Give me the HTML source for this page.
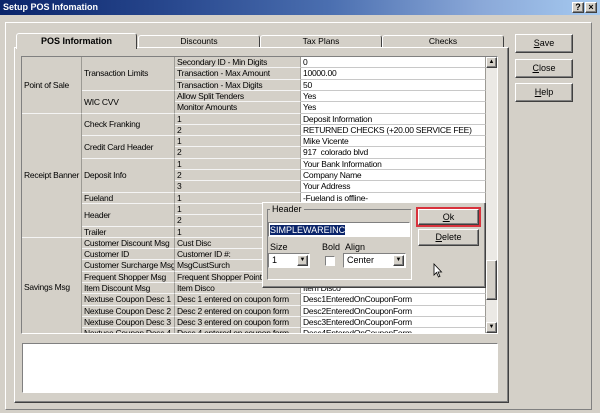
<!DOCTYPE html><html><head><style>
*{margin:0;padding:0;box-sizing:border-box}
body{width:600px;height:413px;background:#d4d0c8;font-family:"Liberation Sans",Arial,sans-serif;font-size:9px;color:#000;position:relative;overflow:hidden}
.a{position:absolute}
.c{position:absolute;background:#d4d0c8;border-right:1px solid #9c9a94;border-bottom:1px solid #f4f4f4;padding-left:2px;line-height:11px;white-space:nowrap;overflow:hidden;display:flex;align-items:center;font-size:8.5px;letter-spacing:-0.25px}
.w{background:#fff;border-bottom:1px solid #c8c8c8}
.btn{position:absolute;background:#d4d0c8;border:1px solid;border-color:#fff #404040 #404040 #fff;box-shadow:inset -1px -1px #808080;text-align:center;font-size:9px}
.sunk{border:1px solid;border-color:#808080 #fff #fff #808080}
</style></head><body>
<div class="a" style="left:0;top:0;width:600px;height:15px;background:linear-gradient(90deg,#0a246a 0%,#2a4a90 30%,#4b6fb0 55%,#8aa8d8 80%,#a6caf0 100%)"></div>
<div class="a" style="left:3px;top:2px;color:#fff;font-weight:bold;font-size:9px">Setup POS Infomation</div>
<div class="btn" style="left:572px;top:2px;width:12px;height:11px;font-weight:bold;line-height:9px">?</div>
<div class="btn" style="left:585px;top:2px;width:12px;height:11px;font-weight:bold;line-height:9px">×</div>
<div class="a" style="left:5px;top:22px;width:587px;height:388px;border:1px solid;border-color:#fff #808080 #808080 #fff"></div>
<div class="a" style="left:14px;top:47px;width:495px;height:356px;border:1px solid;border-color:#fff #404040 #404040 #fff;box-shadow:inset -1px -1px #808080"></div>
<div class="a" style="left:16px;top:33px;width:121px;height:16px;border:1px solid #fff;border-bottom:none;border-right-color:#404040;background:#d4d0c8;border-radius:3px 3px 0 0;text-align:center;font-weight:bold;line-height:15px">POS Information</div>
<div class="a" style="left:138px;top:35px;width:122px;height:12px;border:1px solid #fff;border-bottom:none;border-right-color:#404040;border-radius:3px 3px 0 0;text-align:center;line-height:11px;font-size:8.5px">Discounts</div>
<div class="a" style="left:260px;top:35px;width:122px;height:12px;border:1px solid #fff;border-bottom:none;border-right-color:#404040;border-radius:3px 3px 0 0;text-align:center;line-height:11px;font-size:8.5px">Tax Plans</div>
<div class="a" style="left:382px;top:35px;width:122px;height:12px;border:1px solid #fff;border-bottom:none;border-right-color:#404040;border-radius:3px 3px 0 0;text-align:center;line-height:11px;font-size:8.5px">Checks</div>
<div class="btn" style="left:515px;top:34px;width:58px;height:19px;line-height:17px"><u>S</u>ave</div>
<div class="btn" style="left:515px;top:59px;width:58px;height:19px;line-height:17px"><u>C</u>lose</div>
<div class="btn" style="left:515px;top:83px;width:58px;height:19px;line-height:17px"><u>H</u>elp</div>
<div class="a sunk" style="left:21px;top:56px;width:477px;height:278px;background:#d4d0c8;overflow:hidden">
<div style="position:absolute;left:-22px;top:-57px;width:600px;height:400px">
<div class="c" style="left:22px;top:57px;width:60px;height:57px">Point of Sale</div>
<div class="c" style="left:22px;top:114px;width:60px;height:124px">Receipt Banner</div>
<div class="c" style="left:22px;top:238px;width:60px;height:100px">Savings Msg</div>
<div class="c" style="left:82px;top:57px;width:93px;height:34px">Transaction Limits</div>
<div class="c" style="left:82px;top:91px;width:93px;height:23px">WIC CVV</div>
<div class="c" style="left:82px;top:114px;width:93px;height:22px">Check Franking</div>
<div class="c" style="left:82px;top:136px;width:93px;height:23px">Credit Card Header</div>
<div class="c" style="left:82px;top:159px;width:93px;height:34px">Deposit Info</div>
<div class="c" style="left:82px;top:193px;width:93px;height:11px">Fueland</div>
<div class="c" style="left:82px;top:204px;width:93px;height:23px">Header</div>
<div class="c" style="left:82px;top:227px;width:93px;height:11px">Trailer</div>
<div class="c" style="left:175px;top:57px;width:126px;height:11px">Secondary ID - Min Digits</div>
<div class="c" style="left:175px;top:68px;width:126px;height:12px">Transaction - Max Amount</div>
<div class="c" style="left:175px;top:80px;width:126px;height:11px">Transaction - Max Digits</div>
<div class="c" style="left:175px;top:91px;width:126px;height:11px">Allow Split Tenders</div>
<div class="c" style="left:175px;top:102px;width:126px;height:12px">Monitor Amounts</div>
<div class="c" style="left:175px;top:114px;width:126px;height:11px">1</div>
<div class="c" style="left:175px;top:125px;width:126px;height:11px">2</div>
<div class="c" style="left:175px;top:136px;width:126px;height:11px">1</div>
<div class="c" style="left:175px;top:147px;width:126px;height:12px">2</div>
<div class="c" style="left:175px;top:159px;width:126px;height:11px">1</div>
<div class="c" style="left:175px;top:170px;width:126px;height:11px">2</div>
<div class="c" style="left:175px;top:181px;width:126px;height:12px">3</div>
<div class="c" style="left:175px;top:193px;width:126px;height:11px">1</div>
<div class="c" style="left:175px;top:204px;width:126px;height:11px">1</div>
<div class="c" style="left:175px;top:215px;width:126px;height:12px">2</div>
<div class="c" style="left:175px;top:227px;width:126px;height:11px">1</div>
<div class="c" style="left:82px;top:238px;width:93px;height:11px">Customer Discount Msg</div>
<div class="c" style="left:82px;top:249px;width:93px;height:11px">Customer ID</div>
<div class="c" style="left:82px;top:260px;width:93px;height:12px">Customer Surcharge Msg</div>
<div class="c" style="left:82px;top:272px;width:93px;height:11px">Frequent Shopper Msg</div>
<div class="c" style="left:82px;top:283px;width:93px;height:11px">Item Discount Msg</div>
<div class="c" style="left:82px;top:294px;width:93px;height:12px">Nextuse Coupon Desc 1</div>
<div class="c" style="left:82px;top:306px;width:93px;height:11px">Nextuse Coupon Desc 2</div>
<div class="c" style="left:82px;top:317px;width:93px;height:11px">Nextuse Coupon Desc 3</div>
<div class="c" style="left:82px;top:328px;width:93px;height:11px">Nextuse Coupon Desc 4</div>
<div class="c" style="left:175px;top:238px;width:126px;height:11px">Cust Disc</div>
<div class="c" style="left:175px;top:249px;width:126px;height:11px">Customer ID #:</div>
<div class="c" style="left:175px;top:260px;width:126px;height:12px">MsgCustSurch</div>
<div class="c" style="left:175px;top:272px;width:126px;height:11px">Frequent Shopper Points</div>
<div class="c" style="left:175px;top:283px;width:126px;height:11px">Item Disco</div>
<div class="c" style="left:175px;top:294px;width:126px;height:12px">Desc 1 entered on coupon form</div>
<div class="c" style="left:175px;top:306px;width:126px;height:11px">Desc 2 entered on coupon form</div>
<div class="c" style="left:175px;top:317px;width:126px;height:11px">Desc 3 entered on coupon form</div>
<div class="c" style="left:175px;top:328px;width:126px;height:11px">Desc 4 entered on coupon form</div>
<div class="c w" style="left:301px;top:57px;width:185px;height:11px">0</div>
<div class="c w" style="left:301px;top:68px;width:185px;height:12px">10000.00</div>
<div class="c w" style="left:301px;top:80px;width:185px;height:11px">50</div>
<div class="c w" style="left:301px;top:91px;width:185px;height:11px">Yes</div>
<div class="c w" style="left:301px;top:102px;width:185px;height:12px">Yes</div>
<div class="c w" style="left:301px;top:114px;width:185px;height:11px">Deposit Information</div>
<div class="c w" style="left:301px;top:125px;width:185px;height:11px">RETURNED CHECKS (+20.00 SERVICE FEE)</div>
<div class="c w" style="left:301px;top:136px;width:185px;height:11px">Mike Vicente</div>
<div class="c w" style="left:301px;top:147px;width:185px;height:12px">917 &nbsp;colorado blvd</div>
<div class="c w" style="left:301px;top:159px;width:185px;height:11px">Your Bank Information</div>
<div class="c w" style="left:301px;top:170px;width:185px;height:11px">Company Name</div>
<div class="c w" style="left:301px;top:181px;width:185px;height:12px">Your Address</div>
<div class="c w" style="left:301px;top:193px;width:185px;height:11px">-Fueland is offline-</div>
<div class="c w" style="left:301px;top:204px;width:185px;height:11px"></div>
<div class="c w" style="left:301px;top:215px;width:185px;height:12px"></div>
<div class="c w" style="left:301px;top:227px;width:185px;height:11px"></div>
<div class="c w" style="left:301px;top:238px;width:185px;height:11px"></div>
<div class="c w" style="left:301px;top:249px;width:185px;height:11px"></div>
<div class="c w" style="left:301px;top:260px;width:185px;height:12px"></div>
<div class="c w" style="left:301px;top:272px;width:185px;height:11px"></div>
<div class="c w" style="left:301px;top:283px;width:185px;height:11px">Item Disco</div>
<div class="c w" style="left:301px;top:294px;width:185px;height:12px">Desc1EnteredOnCouponForm</div>
<div class="c w" style="left:301px;top:306px;width:185px;height:11px">Desc2EnteredOnCouponForm</div>
<div class="c w" style="left:301px;top:317px;width:185px;height:11px">Desc3EnteredOnCouponForm</div>
<div class="c w" style="left:301px;top:328px;width:185px;height:11px">Desc4EnteredOnCouponForm</div>
<div class="a" style="left:486px;top:57px;width:11px;height:278px;background:#ebe9e5"></div>
<div class="btn" style="left:486px;top:57px;width:11px;height:11px;font-size:6px;line-height:9px">▲</div>
<div class="btn" style="left:486px;top:260px;width:11px;height:40px"></div>
<div class="btn" style="left:486px;top:322px;width:11px;height:11px;font-size:6px;line-height:9px">▼</div>
</div></div>
<div class="a" style="left:262px;top:202px;width:224px;height:86px;background:#d4d0c8;border:1px solid;border-color:#fff #404040 #404040 #fff;box-shadow:inset -1px -1px #808080"></div>
<div class="a" style="left:267px;top:209px;width:145px;height:71px;border:1px solid;border-color:#808080 #fff #fff #808080"></div>
<div class="a" style="left:270px;top:204px;padding:0 2px;background:#d4d0c8">Header</div>
<div class="a sunk" style="left:268px;top:222px;width:142px;height:15px;background:#fff"><span style="background:#0a246a;color:#fff;position:absolute;left:1px;top:2px;line-height:10px">SIMPLEWAREINC</span></div>
<div class="a" style="left:270px;top:242px">Size</div>
<div class="a" style="left:322px;top:242px">Bold</div>
<div class="a" style="left:345px;top:242px">Align</div>
<div class="a sunk" style="left:268px;top:253px;width:42px;height:15px;background:#fff;padding-left:3px;line-height:13px">1<div class="btn" style="right:1px;top:1px;width:11px;height:11px;font-size:6px;line-height:9px">▼</div></div>
<div class="a sunk" style="left:325px;top:256px;width:10px;height:10px;background:#fff"></div>
<div class="a sunk" style="left:343px;top:253px;width:63px;height:15px;background:#fff;padding-left:3px;line-height:13px">Center<div class="btn" style="right:1px;top:1px;width:11px;height:11px;font-size:6px;line-height:9px">▼</div></div>
<div class="a" style="left:416px;top:207px;width:65px;height:20px;border:2px solid #d8323c"></div>
<div class="btn" style="left:418px;top:209px;width:61px;height:16px;line-height:14px"><u>O</u>k</div>
<div class="btn" style="left:418px;top:229px;width:61px;height:17px;line-height:15px"><u>D</u>elete</div>
<svg class="a" style="left:433px;top:263px" width="10" height="16" viewBox="0 0 10 16"><path d="M1 1 L1 12 L3.5 9.5 L5.5 14 L7 13.3 L5 9 L8.5 9 Z" fill="#fff" stroke="#000" stroke-width="0.8"/></svg>
<div class="a sunk" style="left:22px;top:343px;width:476px;height:50px;background:#fff"></div>
</body></html>
